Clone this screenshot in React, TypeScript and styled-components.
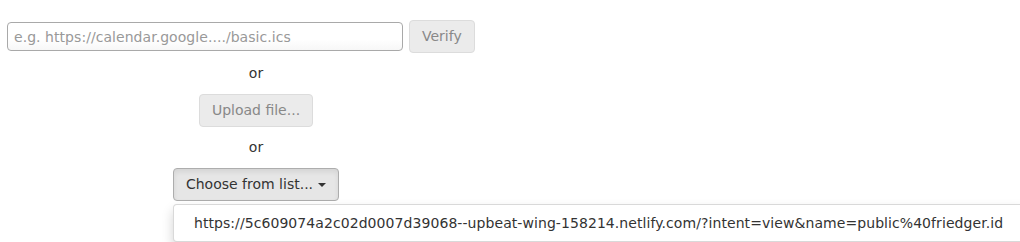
import React from "react";
import styled, { createGlobalStyle } from "styled-components";

const Global = createGlobalStyle`
  html { overflow: hidden; }
  html, body { margin: 0; padding: 0; background: #fff; }
  body { font-family: "DejaVu Sans", Verdana, sans-serif; font-size: 14px; color: #333; }
  * { box-sizing: border-box; }
`;

const Page = styled.div`
  width: 505px;
  min-height: 242px;
  padding: 20px 0 0 7px;
  display: flex;
  flex-direction: column;
  align-items: center;
`;

const UrlRow = styled.div`
  align-self: stretch;
  display: flex;
  align-items: center;
  gap: 6px;
`;

const UrlInput = styled.input`
  width: 396px;
  height: 29px;
  padding: 4px 6px;
  border: 1px solid #a9a9a9;
  border-radius: 4px;
  background: linear-gradient(#fff 60%, #f7f7f7);
  font: inherit;
  font-size: 14px;
  letter-spacing: 0.05px;
  color: #333;
  outline: none;
  &::placeholder { color: #999; }
`;

const Button = styled.button<{ $active?: boolean }>`
  display: inline-flex;
  align-items: center;
  gap: 5px;
  height: 33px;
  padding: 6px 12px;
  font: inherit;
  font-size: 14px;
  line-height: 19px;
  border-radius: 4px;
  border: 1px solid ${(p) => (p.$active ? "#adadad" : "#dcdcdc")};
  background: ${(p) => (p.$active ? "#e6e6e6" : "#ebebeb")};
  color: ${(p) => (p.$active ? "#333" : "#888")};
  box-shadow: ${(p) => (p.$active ? "inset 0 3px 5px rgba(0,0,0,.08)" : "none")};
  cursor: pointer;
`;

const Or = styled.div`
  padding: 10px 0 11px;
  line-height: 20px;
  color: #333;
`;

const DropWrap = styled.div`
  position: relative;
  z-index: 1;
`;

const Caret = styled.span`
  width: 0;
  height: 0;
  border-left: 4px solid transparent;
  border-right: 4px solid transparent;
  border-top: 4px solid #333;
  margin-top: 1px;
`;

const Menu = styled.div`
  position: absolute;
  top: 100%;
  left: 0;
  margin-top: 3px;
  padding: 5px 0;
  background: #fff;
  border: 1px solid rgba(0, 0, 0, 0.15);
  border-radius: 4px;
  box-shadow: 0 6px 12px rgba(0, 0, 0, 0.175);
  white-space: nowrap;
`;

const MenuItem = styled.div`
  padding: 3px 20px;
  line-height: 20px;
  letter-spacing: 0.07px;
  color: #333;
`;

export default function App() {
  return (
    <>
      <Global />
      <Page>
        <UrlRow>
          <UrlInput placeholder="e.g. https://calendar.google..../basic.ics" />
          <Button disabled>Verify</Button>
        </UrlRow>
        <Or>or</Or>
        <Button disabled>Upload file...</Button>
        <Or>or</Or>
        <DropWrap>
          <Button $active>
            Choose from list... <Caret />
          </Button>
          <Menu>
            <MenuItem>
              https://5c609074a2c02d0007d39068--upbeat-wing-158214.netlify.com/?intent=view&amp;name=public%40friedger.id
            </MenuItem>
          </Menu>
        </DropWrap>
      </Page>
    </>
  );
}
